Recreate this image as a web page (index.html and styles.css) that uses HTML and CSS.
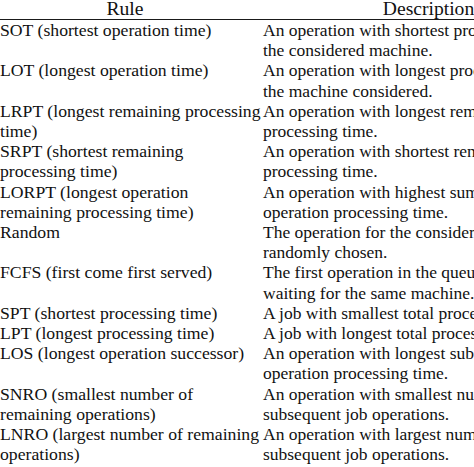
FILE: index.html
```html
<!DOCTYPE html>
<html>
<head>
<meta charset="utf-8">
<link rel="stylesheet" href="styles.css">
</head>
<body>
<div class="table">
  <div class="head">
    <div class="c1">Rule</div>
    <div class="c2">Description</div>
  </div>
  <div class="row">
    <div class="c1">SOT (shortest operation time)</div>
    <div class="c2">An operation with shortest processing time on<br>the considered machine.</div>
  </div>
  <div class="row">
    <div class="c1">LOT (longest operation time)</div>
    <div class="c2">An operation with longest processing time on<br>the machine considered.</div>
  </div>
  <div class="row">
    <div class="c1">LRPT (longest remaining processing<br>time)</div>
    <div class="c2">An operation with longest remaining job<br>processing time.</div>
  </div>
  <div class="row">
    <div class="c1">SRPT (shortest remaining<br>processing time)</div>
    <div class="c2">An operation with shortest remaining job<br>processing time.</div>
  </div>
  <div class="row">
    <div class="c1">LORPT (longest operation<br>remaining processing time)</div>
    <div class="c2">An operation with highest sum of tail and<br>operation processing time.</div>
  </div>
  <div class="row">
    <div class="c1">Random</div>
    <div class="c2">The operation for the considered machine is<br>randomly chosen.</div>
  </div>
  <div class="row">
    <div class="c1">FCFS (first come first served)</div>
    <div class="c2">The first operation in the queue of jobs<br>waiting for the same machine.</div>
  </div>
  <div class="row">
    <div class="c1">SPT (shortest processing time)</div>
    <div class="c2">A job with smallest total processing time.</div>
  </div>
  <div class="row">
    <div class="c1">LPT (longest processing time)</div>
    <div class="c2">A job with longest total processing time.</div>
  </div>
  <div class="row">
    <div class="c1">LOS (longest operation successor)</div>
    <div class="c2">An operation with longest subsequent<br>operation processing time.</div>
  </div>
  <div class="row">
    <div class="c1">SNRO (smallest number of<br>remaining operations)</div>
    <div class="c2">An operation with smallest number of<br>subsequent job operations.</div>
  </div>
  <div class="row">
    <div class="c1">LNRO (largest number of remaining<br>operations)</div>
    <div class="c2">An operation with largest number of<br>subsequent job operations.</div>
  </div>
</div>
</body>
</html>
```
FILE: styles.css
```css
html, body {
  margin: 0;
  padding: 0;
  background: #ffffff;
  overflow: hidden;
}
body {
  width: 474px;
  height: 467px;
  font-family: "Liberation Serif", "Times New Roman", serif;
  color: #111111;
}
.table {
  width: 620px;
}
.head {
  display: flex;
  height: 19px;
  border-bottom: 1.5px solid #1a1a1a;
  font-size: 19.6px;
  line-height: 17px;
}
.head .c1 {
  flex: none;
  width: 250px;
  text-align: center;
}
.head .c2 {
  flex: none;
  width: 333px;
  margin-left: 12px;
  text-align: center;
}
.row {
  display: flex;
  line-height: 20.2px;
  white-space: nowrap;
}
.row .c1 {
  flex: none;
  width: 262px;
  font-size: 17.7px;
}
.row .c2 {
  flex: none;
  padding-left: 1px;
  font-size: 17.5px;
}
```
